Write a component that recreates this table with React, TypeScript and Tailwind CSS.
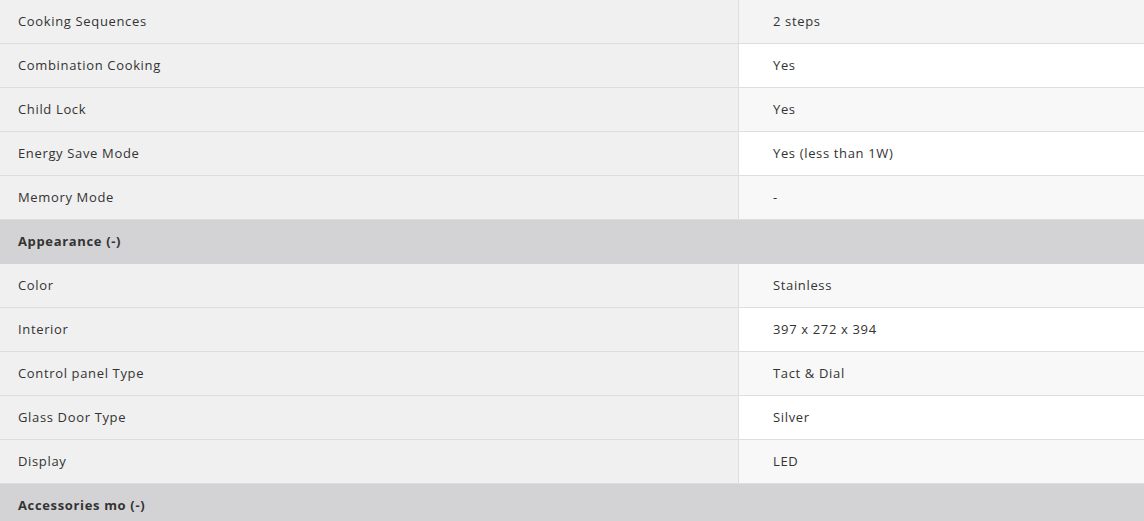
import React from 'react';

type Row = { label: string; value?: string; section?: boolean };

const rows: Row[] = [
  { label: 'Cooking Sequences', value: '2 steps' },
  { label: 'Combination Cooking', value: 'Yes' },
  { label: 'Child Lock', value: 'Yes' },
  { label: 'Energy Save Mode', value: 'Yes (less than 1W)' },
  { label: 'Memory Mode', value: '-' },
  { label: 'Appearance (-)', section: true },
  { label: 'Color', value: 'Stainless' },
  { label: 'Interior', value: '397 x 272 x 394' },
  { label: 'Control panel Type', value: 'Tact & Dial' },
  { label: 'Glass Door Type', value: 'Silver' },
  { label: 'Display', value: 'LED' },
  { label: 'Accessories mo (-)', section: true },
];

const App: React.FC = () => {
  let i = 0;
  return (
    <div className="w-[1144px] h-[521px] overflow-hidden bg-white font-['Open_Sans',sans-serif] text-[13px] tracking-[0.65px] text-[#333]">
      {rows.map((r, idx) => {
        if (r.section) {
          i = 0;
          return (
            <div key={idx} className="h-[44px] flex items-center bg-[#d3d3d5] px-[18px] font-bold border-b border-[#d3d3d5]">
              {r.label}
            </div>
          );
        }
        const first = idx === 0;
        const alt = i++ % 2 === 0;
        const rightBg = first ? 'bg-[#f4f4f4]' : alt ? 'bg-[#f8f8f8]' : 'bg-white';
        return (
          <div key={idx} className="h-[44px] flex border-b border-[#dedede]">
            <div className="w-[739px] flex items-center bg-[#f0f0f0] px-[18px] border-r border-[#dedede]">
              {r.label}
            </div>
            <div className={`flex-1 flex items-center pl-[34px] ${rightBg}`}>{r.value}</div>
          </div>
        );
      })}
    </div>
  );
};

export default App;
